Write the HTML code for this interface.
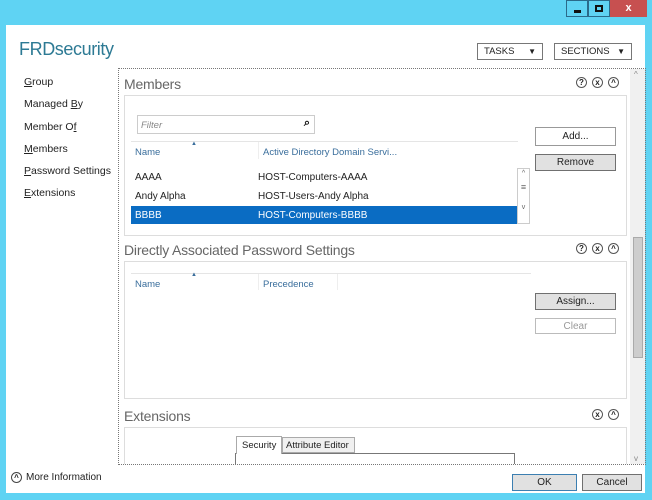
<!DOCTYPE html><html><head><style>
*{margin:0;padding:0;box-sizing:border-box}
body{width:652px;height:500px;background:#5fd3f3;position:relative;overflow:hidden;font-family:"Liberation Sans",sans-serif;font-size:10px;color:#222}
.a{position:absolute}
.nav{font-size:10.5px;color:#222}
.btn{position:absolute;border:1px solid #707070;background:#e1e1e1;text-align:center;font-size:10px;line-height:15px}
.hdr{font-size:14px;color:#666;letter-spacing:-0.2px}
.col{color:#3a6e9c;font-size:9.5px}
.ic{position:absolute;width:11px;height:11px;border:1px solid #555;border-radius:50%;font-size:8px;line-height:9px;text-align:center;font-weight:bold;color:#222}
</style></head><body>
<div class="a" style="left:566px;top:0;width:22px;height:17px;background:#5fd3f3;border:1px solid #2a6a8a"><div class="a" style="left:7px;top:9px;width:7px;height:3px;background:#111"></div></div>
<div class="a" style="left:588px;top:0;width:22px;height:17px;background:#5fd3f3;border:1px solid #2a6a8a"><div class="a" style="left:6px;top:4px;width:8px;height:7px;border:2px solid #111"></div></div>
<div class="a" style="left:610px;top:0;width:37px;height:17px;background:#c75050;color:#fff;font-weight:bold;font-size:11px;text-align:center;line-height:16px">x</div>
<div class="a" style="left:6px;top:25px;width:639px;height:468px;background:#fff"></div>
<div class="a" style="left:19px;top:39px;font-size:18px;letter-spacing:-0.4px;color:#2d7a94">FRDsecurity</div>
<div class="a" style="left:477px;top:43px;width:66px;height:17px;border:1px solid #777;font-size:9.5px;line-height:15px;padding-left:6px">TASKS <span style="position:absolute;right:6px;font-size:8px">▼</span></div>
<div class="a" style="left:554px;top:43px;width:78px;height:17px;border:1px solid #777;font-size:9.5px;line-height:15px;padding-left:6px">SECTIONS <span style="position:absolute;right:6px;font-size:8px">▼</span></div>
<div class="a nav" style="left:24px;top:76px"><u>G</u>roup</div>
<div class="a nav" style="left:24px;top:98px">Managed <u>B</u>y</div>
<div class="a nav" style="left:24px;top:121px">Member O<u>f</u></div>
<div class="a nav" style="left:24px;top:143px"><u>M</u>embers</div>
<div class="a nav" style="left:24px;top:165px"><u>P</u>assword Settings</div>
<div class="a nav" style="left:24px;top:187px"><u>E</u>xtensions</div>
<div class="a" style="left:118px;top:68px;width:528px;height:397px;border:1px dotted #777"></div>
<div class="a" style="left:630px;top:69px;width:15px;height:395px;background:#f0f0f0"></div>
<div class="a" style="left:633px;top:237px;width:10px;height:121px;background:#cdcdcd;border:1px solid #aaa"></div>
<div class="a" style="left:634px;top:70px;font-size:8px;color:#888">^</div>
<div class="a" style="left:634px;top:454px;font-size:8px;color:#888">v</div>
<div class="a hdr" style="left:124px;top:76px">Members</div>
<div class="ic" style="left:576px;top:77px">?</div><div class="ic" style="left:592px;top:77px">x</div><div class="ic" style="left:608px;top:77px">^</div>
<div class="a" style="left:124px;top:95px;width:503px;height:141px;border:1px solid #ddd"></div>
<div class="a" style="left:137px;top:115px;width:178px;height:19px;border:1px solid #ccc;font-style:italic;color:#888;font-size:9.5px;padding:4px 3px">Filter<span style="position:absolute;right:4px;top:1px;font-style:normal;color:#111;font-size:11px;font-weight:bold">⌕</span></div>
<div class="a" style="left:131px;top:141px;width:387px;height:1px;background:#e5e5e5"></div>
<div class="a" style="left:191px;top:141px;font-size:6px;color:#3a6e9c">▲</div>
<div class="a col" style="left:135px;top:147px">Name</div>
<div class="a col" style="left:263px;top:147px">Active Directory Domain Servi...</div>
<div class="a" style="left:258px;top:142px;width:1px;height:17px;background:#eee"></div>
<div class="a" style="left:135px;top:172px">AAAA</div><div class="a" style="left:258px;top:172px">HOST-Computers-AAAA</div>
<div class="a" style="left:135px;top:191px">Andy Alpha</div><div class="a" style="left:258px;top:191px">HOST-Users-Andy Alpha</div>
<div class="a" style="left:131px;top:206px;width:386px;height:18px;background:#0a6cc3"></div>
<div class="a" style="left:135px;top:210px;color:#fff">BBBB</div><div class="a" style="left:258px;top:210px;color:#fff">HOST-Computers-BBBB</div>
<div class="a" style="left:517px;top:168px;width:13px;height:56px;border:1px solid #ccc;background:#fff;font-size:7px;color:#666;text-align:center"><div style="margin-top:1px">^</div><div style="margin-top:5px;font-size:9px">≡</div><div style="margin-top:12px">v</div></div>
<div class="btn" style="left:535px;top:127px;width:81px;height:19px;background:#fff;border-color:#999;line-height:17px">Add...</div>
<div class="btn" style="left:535px;top:154px;width:81px;height:17px">Remove</div>
<div class="a hdr" style="left:124px;top:242px">Directly Associated Password Settings</div>
<div class="ic" style="left:576px;top:243px">?</div><div class="ic" style="left:592px;top:243px">x</div><div class="ic" style="left:608px;top:243px">^</div>
<div class="a" style="left:124px;top:261px;width:503px;height:138px;border:1px solid #ddd"></div>
<div class="a" style="left:131px;top:273px;width:400px;height:1px;background:#e5e5e5"></div>
<div class="a" style="left:191px;top:272px;font-size:6px;color:#3a6e9c">▲</div>
<div class="a col" style="left:135px;top:279px">Name</div>
<div class="a col" style="left:263px;top:279px">Precedence</div>
<div class="a" style="left:258px;top:274px;width:1px;height:16px;background:#eee"></div>
<div class="a" style="left:337px;top:274px;width:1px;height:16px;background:#eee"></div>
<div class="btn" style="left:535px;top:293px;width:81px;height:17px">Assign...</div>
<div class="btn" style="left:535px;top:318px;width:81px;height:16px;background:#fff;border-color:#bbb;color:#999">Clear</div>
<div class="a hdr" style="left:124px;top:408px">Extensions</div>
<div class="ic" style="left:592px;top:409px">x</div><div class="ic" style="left:608px;top:409px">^</div>
<div class="a" style="left:124px;top:427px;width:503px;height:37px;border:1px solid #ddd;border-bottom:none"></div>
<div class="a" style="left:235px;top:453px;width:280px;height:11px;border:1px solid #777;border-bottom:none"></div>
<div class="a" style="left:236px;top:436px;width:46px;height:18px;border:1px solid #aaa;border-bottom:none;background:#fff;padding:3px 5px;font-size:9.5px">Security</div>
<div class="a" style="left:282px;top:437px;width:73px;height:16px;border:1px solid #aaa;background:#f0f0f0;padding:2px 3px;font-size:9.5px">Attribute Editor</div>
<div class="ic" style="left:11px;top:472px;border-color:#444">^</div>
<div class="a" style="left:26px;top:472px">More Information</div>
<div class="btn" style="left:512px;top:474px;width:65px;height:17px;border-color:#3c7fb1">OK</div>
<div class="btn" style="left:582px;top:474px;width:60px;height:17px">Cancel</div>
</body></html>
